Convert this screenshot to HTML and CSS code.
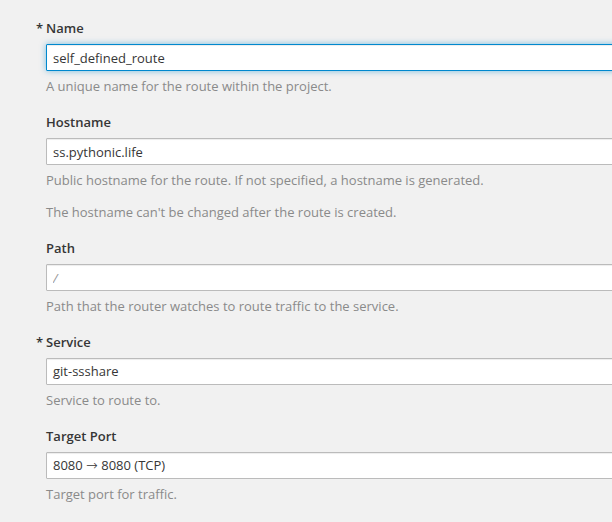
FILE: index.html
```html
<!DOCTYPE html>
<html lang="en">
<head>
<meta charset="utf-8">
<title>Create Route</title>
<link rel="stylesheet" href="styles.css">
</head>
<body>
<form class="route-form">
  <div class="form-group">
    <label class="control-label required" for="name">Name</label>
    <input class="form-control focused" id="name" type="text" value="self_defined_route">
    <div class="help-block">A unique name for the route within the project.</div>
  </div>
  <div class="form-group">
    <label class="control-label" for="host">Hostname</label>
    <input class="form-control" id="host" type="text" value="ss.pythonic.life">
    <div class="help-block">Public hostname for the route. If not specified, a hostname is generated.</div>
    <div class="help-block extra">The hostname can't be changed after the route is created.</div>
  </div>
  <div class="form-group">
    <label class="control-label" for="path">Path</label>
    <input class="form-control" id="path" type="text" placeholder="/">
    <div class="help-block">Path that the router watches to route traffic to the service.</div>
  </div>
  <div class="form-group">
    <label class="control-label required">Service</label>
    <div class="form-control select">git-ssshare</div>
    <div class="help-block">Service to route to.</div>
  </div>
  <div class="form-group">
    <label class="control-label">Target Port</label>
    <div class="form-control select">8080 <span class="arrow">&rarr;</span> 8080 (TCP)</div>
    <div class="help-block">Target port for traffic.</div>
  </div>
</form>
</body>
</html>
```
FILE: styles.css
```css
html, body {
  margin: 0;
  padding: 0;
}
body {
  background: #f1f1f1;
  font-family: "Open Sans", "Noto Sans", sans-serif;
  font-size: 13px;
  color: #363636;
  overflow: hidden;
  width: 612px;
  height: 522px;
}
.route-form {
  box-sizing: border-box;
  padding: 19px 0 0 46px;
  width: 612px;
  height: 522px;
  overflow: hidden;
}
.form-group {
  display: flex;
  flex-direction: column;
  align-items: flex-start;
  margin-bottom: 18px;
}
.control-label {
  display: block;
  font-weight: 600;
  font-size: 13px;
  line-height: 18px;
  margin-bottom: 7px;
  color: #363636;
}
.required::before {
  content: "*";
  display: inline-block;
  width: 10px;
  margin-left: -10px;
}
.form-control {
  box-sizing: border-box;
  flex: none;
  width: 620px;
  height: 27px;
  margin: 0;
  padding: 0 6px;
  border: 1px solid #bbbbbb;
  border-radius: 1px;
  background: #ffffff;
  font-family: inherit;
  font-size: 13px;
  line-height: 25px;
  color: #363636;
  box-shadow: inset 0 1px 1px rgba(3, 3, 3, 0.075);
  outline: none;
}
.form-control::placeholder {
  color: #999999;
  font-style: italic;
}
.form-control.focused {
  border-color: #0088ce;
  box-shadow: inset 0 1px 1px rgba(3, 3, 3, 0.075), 0 0 6px rgba(0, 136, 206, 0.5);
}
.arrow {
  font-family: "DejaVu Sans", sans-serif;
  font-weight: 200;
  font-size: 14px;
  line-height: 1;
}
.help-block {
  margin-top: 6px;
  font-size: 13px;
  line-height: 18px;
  color: #8a8a8a;
}
.help-block.extra {
  margin-top: 14px;
}
```
